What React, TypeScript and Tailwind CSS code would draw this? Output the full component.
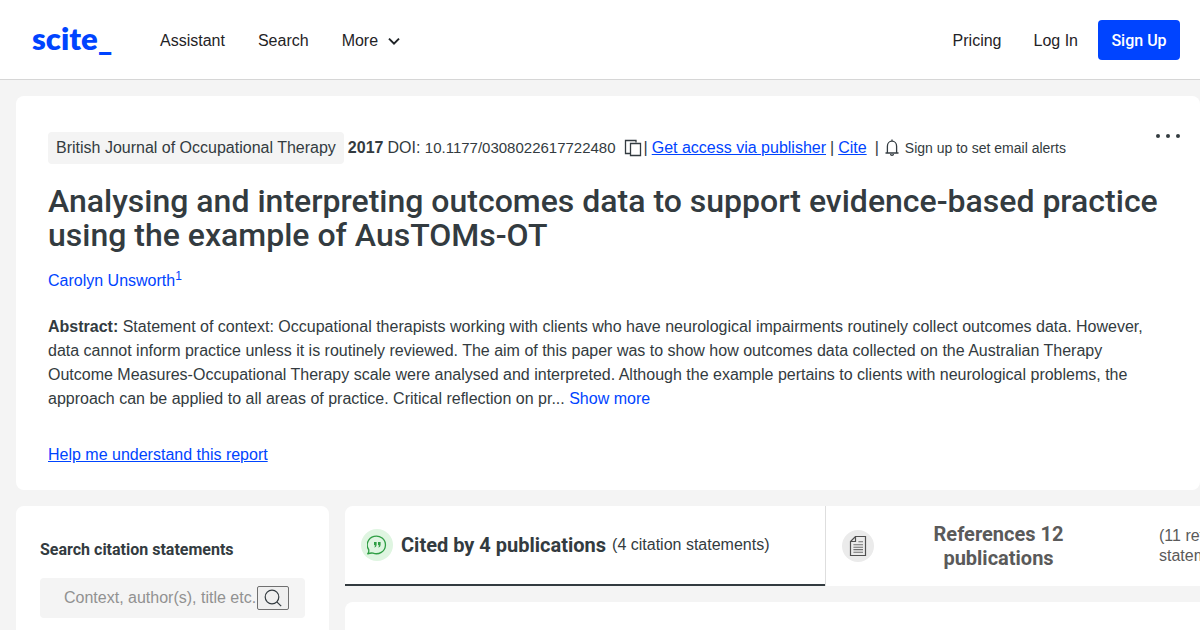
import type { ReactNode } from "react";

function NavLink({ children }: { children: ReactNode }) {
  return (
    <a href="#" className="text-[#1f2326]">
      {children}
    </a>
  );
}

function Header() {
  return (
    <header className="flex h-20 items-center border-b border-[#d6d6d6] bg-white pr-5 pl-8">
      <a
        href="#"
        className="w-20 pb-1 font-['Lato',sans-serif] text-[31px] leading-8 font-extrabold text-[#0044ff]"
      >
        scite_
      </a>
      <nav className="ml-12 flex items-center gap-[33px] pt-0.5">
        <NavLink>Assistant</NavLink>
        <NavLink>Search</NavLink>
        <button type="button" className="flex items-center gap-2 text-[#1f2326]">
          More
          <svg width="16" height="16" viewBox="0 0 16 16" fill="none" stroke="currentColor" strokeWidth="2" aria-hidden="true">
            <path d="M3 5.600 8 10.600l5-5" />
          </svg>
        </button>
      </nav>
      <div className="ml-auto flex items-center">
        <nav className="flex gap-8 pt-0.5">
          <NavLink>Pricing</NavLink>
          <NavLink>Log In</NavLink>
        </nav>
        <a
          href="#"
          className="ml-5 flex h-10 w-[82px] items-center justify-center rounded bg-[#0044ff] pt-0.5 font-['Roboto','Liberation_Sans',sans-serif] font-medium text-white"
        >
          Sign Up
        </a>
      </div>
    </header>
  );
}

function CopyIcon() {
  return (
    <svg width="18" height="18" viewBox="0 0 18 18" fill="none" stroke="currentColor" strokeWidth="1.3" aria-hidden="true">
      <path d="M6 14.500H1.500V1.500H12v2" />
      <path d="M6.500 4.500h10v12h-10z" />
    </svg>
  );
}

function BellIcon() {
  return (
    <svg width="14" height="18" viewBox="0 0 14 18" fill="none" stroke="currentColor" strokeWidth="1.3" aria-hidden="true">
      <path d="M7 .5v1.700M.5 14h13M2.400 14V7.200C2.400 4.200 4.400 2.200 7 2.200s4.600 2 4.600 5V14" />
      <path d="M5.600 15a1.400 1.400 0 0 0 2.800 0" />
    </svg>
  );
}

function PaperCard() {
  return (
    <section className="relative rounded-lg bg-white px-8 pt-9 pb-[23px]">
      <button type="button" aria-label="More options" className="absolute top-7 right-4 flex h-6 items-center text-[#333b40]">
        <svg width="32" height="6" viewBox="0 0 32 6" fill="currentColor" aria-hidden="true">
          <circle cx="6" cy="3" r="2" />
          <circle cx="16" cy="3" r="2" />
          <circle cx="26" cy="3" r="2" />
        </svg>
      </button>
      <div className="flex h-8 items-center whitespace-nowrap">
        <span className="rounded bg-[#f4f4f4] px-2 py-1">British Journal of Occupational Therapy</span>
        <b className="ml-1">2017</b>
        <span className="ml-1">
          DOI: <span className="text-[15px]">10.1177/0308022617722480</span>
        </span>
        <button type="button" aria-label="Copy DOI" className="ml-2">
          <CopyIcon />
        </button>
        <span className="ml-0.5">|</span>
        <a href="#" className="ml-1 text-[#0044ff] underline">
          Get access via publisher
        </a>
        <span className="ml-1">|</span>
        <a href="#" className="ml-1 text-[#0044ff] underline">
          Cite
        </a>
        <span className="ml-2">|</span>
        <button type="button" className="ml-1.5 flex items-center gap-1.5 text-sm">
          <BellIcon />
          Sign up to set email alerts
        </button>
      </div>
      <h1 className="mt-5 font-['Roboto','Liberation_Sans',sans-serif] text-[32px] leading-[34px] font-medium">
        Analysing and interpreting outcomes data to support evidence-based practice using the example of AusTOMs-OT
      </h1>
      <p className="mt-[17px] leading-6">
        <a href="#" className="text-[#0044ff]">
          Carolyn Unsworth<sup className="text-xs">1</sup>
        </a>
      </p>
      <p className="mt-[22px] leading-6">
        <b>Abstract:</b> Statement of context: Occupational therapists working with clients who have neurological
        impairments routinely collect outcomes data. However, data cannot inform practice unless it is routinely
        reviewed. The aim of this paper was to show how outcomes data collected on the Australian Therapy Outcome
        Measures-Occupational Therapy scale were analysed and interpreted. Although the example pertains to clients with
        neurological problems, the approach can be applied to all areas of practice. Critical reflection on pr...{" "}
        <button type="button" className="text-[#0044ff]">
          Show more
        </button>
      </p>
      <p className="mt-8 leading-6">
        <a href="#" className="text-[#0044ff] underline">
          Help me understand this report
        </a>
      </p>
    </section>
  );
}

function SearchPanel() {
  return (
    <aside className="w-[313px] shrink-0 rounded-lg bg-white px-6 pt-8 pb-8">
      <label
        htmlFor="citation-search"
        className="block font-['Roboto','Liberation_Sans',sans-serif] leading-6 font-bold"
      >
        Search citation statements
      </label>
      <form className="mt-4 flex h-10 items-center rounded bg-[#f4f4f4] pr-4 pl-6">
        <input
          id="citation-search"
          type="text"
          placeholder="Context, author(s), title etc."
          className="min-w-0 flex-1 bg-transparent outline-none placeholder:text-[#919191]"
        />
        <button
          type="button"
          aria-label="Search"
          className="flex h-6 w-8 shrink-0 items-center justify-center rounded-xs border border-[#707070] bg-[#efefef]"
        >
          <svg width="18" height="18" viewBox="0 0 18 18" fill="none" stroke="currentColor" strokeWidth="1.200" aria-hidden="true">
            <circle cx="8" cy="8" r="6.800" />
            <path d="m12.800 12.800 4.400 4.400" />
          </svg>
        </button>
      </form>
    </aside>
  );
}

function QuoteIcon() {
  return (
    <span className="flex size-8 shrink-0 items-center justify-center rounded-full bg-[#dff5e1] text-[#2f9e44]">
      <svg width="20" height="20" viewBox="0 0 20 20" fill="none" stroke="currentColor" strokeWidth="1.300" aria-hidden="true">
        <path d="M.7 18.800c1-.9 1.300-2.300 1-4.100A9.100 8.800 0 1 1 6 18.100c-1.600-.3-3.300 0-5.300.7z" strokeLinejoin="round" />
        <path
          d="M7 7h2.600v2.600c0 1.500-.7 2.500-1.900 3l-.4-.7c.6-.4.900-.9.900-1.700H7zM11 7h2.600v2.600c0 1.500-.7 2.500-1.900 3l-.4-.7c.6-.4.900-.9.900-1.700H11z"
          fill="currentColor"
          stroke="none"
        />
      </svg>
    </span>
  );
}

function DocumentIcon() {
  return (
    <span className="flex size-8 shrink-0 items-center justify-center rounded-full bg-[#ebebeb] text-[#505050]">
      <svg width="18" height="20" viewBox="0 0 18 20" fill="none" stroke="currentColor" strokeWidth="1.200" aria-hidden="true">
        <path d="M6.500.5h10v19h-15v-14zM6.500.5v5h-5" />
        <path d="M9.400 5.800H14M4.400 8.800H14M4.400 11.200H14M4.400 13.600H14M4.400 16.200H14" stroke="#707070" strokeWidth="1.100" />
      </svg>
    </span>
  );
}

function Tabs() {
  return (
    <div role="tablist" className="flex h-20">
      <button
        type="button"
        role="tab"
        aria-selected="true"
        className="flex w-[480px] shrink-0 items-center rounded-tl-lg border-b-2 border-[#333b40] bg-white px-4 whitespace-nowrap"
      >
        <QuoteIcon />
        <span className="ml-2 font-['Roboto','Liberation_Sans',sans-serif] text-xl font-bold">
          Cited by 4 publications
        </span>
        <span className="ml-1.5">(4 citation statements)</span>
      </button>
      <button
        type="button"
        role="tab"
        aria-selected="false"
        className="flex w-[480px] shrink-0 items-center border-l border-[#dedede] bg-white px-4 text-[#5a5a5a]"
      >
        <DocumentIcon />
        <span className="flex-1 px-12 font-['Roboto','Liberation_Sans',sans-serif] text-xl leading-6 font-bold">
          References 12 publications
        </span>
        <span className="w-[166px] pr-7 pl-9 text-left leading-5">(11 reference statements)</span>
      </button>
    </div>
  );
}

export default function App() {
  return (
    <div className="h-screen overflow-hidden bg-[#f4f4f4] font-['Liberation_Sans',sans-serif] text-base text-[#333b40]">
      <Header />
      <main className="pt-4 pl-4">
        <PaperCard />
        <div className="mt-4 flex gap-4">
          <SearchPanel />
          <div className="min-w-0 flex-1 overflow-hidden">
            <Tabs />
            <section className="mt-4 h-40 rounded-tl-lg bg-white" />
          </div>
        </div>
      </main>
    </div>
  );
}
